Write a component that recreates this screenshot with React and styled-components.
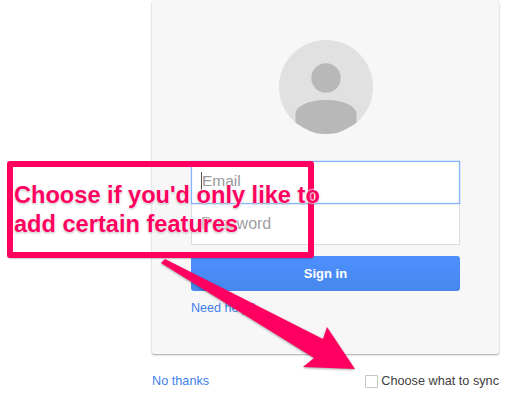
import React from "react";
import styled, { createGlobalStyle } from "styled-components";

const Global = createGlobalStyle`
  html, body { margin: 0; padding: 0; background: #fff; }
  body { font-family: "Liberation Sans", Arial, sans-serif; }
`;
const Page = styled.div`
  position: relative;
  width: 532px;
  height: 400px;
  overflow: hidden;
  box-sizing: border-box;
  padding: 1px 33px 0 152px;
  display: flex;
  flex-direction: column;
`;
const Card = styled.div`
  height: 353px;
  box-sizing: border-box;
  padding: 39px 39px 0;
  background: #f7f7f7;
  border-radius: 2px;
  box-shadow: 0 1px 2px rgba(0, 0, 0, 0.35), 0 0 1px rgba(0, 0, 0, 0.12);
  display: flex;
  flex-direction: column;
`;
const AvatarSvg = styled.svg`
  width: 94px;
  height: 94px;
  align-self: center;
  display: block;
  margin-bottom: 27px;
`;
const Fields = styled.div`
  display: flex;
  flex-direction: column;
  margin-bottom: 11px;
`;
const Field = styled.div`
  box-sizing: border-box;
  height: 41px;
  background: #fff;
  box-shadow: inset -1px -1px 0 #dcdcdc, inset 1px 0 0 #dcdcdc;
  display: flex;
  align-items: center;
  padding: 0 0 2px 10px;
  font-size: 16px;
  color: #a0a0a0;
`;
const FocusField = styled(Field)`
  position: relative;
  height: 43px;
  box-shadow: inset 0 0 1px 1px rgba(77, 144, 254, 0.75), 0 0 1px rgba(77, 144, 254, 0.9);
  color: #999;
  font-size: 15.5px;
  padding-bottom: 4px;
`;
const Caret = styled.span`
  width: 1px;
  height: 18px;
  background: #555;
`;
const SignIn = styled.div`
  height: 35px;
  border-radius: 3px;
  background: linear-gradient(#4d90fe, #4787ed);
  color: #fff;
  font-size: 13px;
  font-weight: 700;
  display: flex;
  align-items: center;
  justify-content: center;
`;
const Help = styled.a`
  color: #427fed;
  font-size: 12.6px;
  margin-top: 9px;
  line-height: 16px;
`;
const Footer = styled.div`
  display: flex;
  justify-content: space-between;
  align-items: center;
  margin-top: 19px;
  font-size: 12.7px;
  line-height: 16px;
`;
const NoThanks = styled.a`
  color: #427fed;
`;
const Sync = styled.label`
  display: flex;
  align-items: center;
  gap: 3px;
  color: #404040;
`;
const Box = styled.span`
  box-sizing: border-box;
  width: 13px;
  height: 13px;
  background: #fff;
  border: 1px solid #c6c6c6;
  border-radius: 1px;
`;
const Arrow = styled.svg`
  position: absolute;
  left: 0;
  top: 0;
  width: 532px;
  height: 400px;
  filter: drop-shadow(0 1px 1px rgba(0, 0, 0, 0.35));
`;
const Callout = styled.div`
  position: absolute;
  left: 7px;
  top: 161px;
  width: 307px;
  height: 97px;
  box-sizing: border-box;
  border: 6px solid #ff0060;
  border-radius: 3px;
  box-shadow: 0 1px 1px rgba(0, 0, 0, 0.2);
`;
const CalloutText = styled.div`
  position: absolute;
  left: 14px;
  top: 181px;
  width: 330px;
  color: #ff0060;
  font-size: 23.6px;
  font-weight: 700;
  line-height: 29px;
  text-shadow: 0 0 2px #fff, 0 0 2px #fff, 0 0 2px #fff, 0 1px 2px rgba(0, 0, 0, 0.45);
`;

export default function App() {
  return (
    <Page>
      <Global />
      <Card>
        <AvatarSvg viewBox="0 0 94 94">
          <defs>
            <clipPath id="av"><circle cx="47" cy="47" r="47" /></clipPath>
          </defs>
          <circle cx="47" cy="47" r="47" fill="#e1e1e1" />
          <circle cx="47" cy="38" r="14.7" fill="#b8b8b8" />
          <g clipPath="url(#av)">
            <path d="M16.5 83 V74 C16.5 66 30 60 47 60 C64 60 77.500 66 77.500 74 V83 L47 100 Z" fill="#b8b8b8" />
          </g>
        </AvatarSvg>
        <Fields>
          <FocusField><Caret />Email</FocusField>
          <Field>Password</Field>
        </Fields>
        <SignIn>Sign in</SignIn>
        <Help>Need help?</Help>
      </Card>
      <Footer>
        <NoThanks>No thanks</NoThanks>
        <Sync><Box />Choose what to sync</Sync>
      </Footer>
      <Arrow viewBox="0 0 532 400">
        <path d="M165 259 L323 339 L327 327 L355 369 L303 367 L314 358 L161 263 Z" fill="#ff0060" />
      </Arrow>
      <Callout />
      <CalloutText>Choose if you'd only like to<br />add certain features</CalloutText>
    </Page>
  );
}
